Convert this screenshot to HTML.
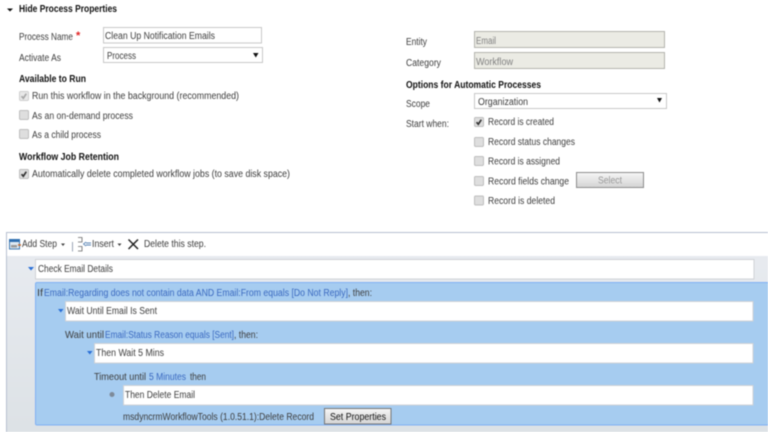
<!DOCTYPE html>
<html><head><meta charset="utf-8">
<style>
html,body{margin:0;padding:0;background:#fff;width:768px;height:432px;overflow:hidden}
svg{display:block;filter:blur(0.45px)}
text{font-family:"Liberation Sans",sans-serif;font-size:10px;fill:#3c3c3c;white-space:pre}
.b{font-weight:bold;fill:#111;font-size:10px}
.l{fill:#3a69c0}
.g{fill:#808080}
.box{fill:#fff;stroke:#c8c8c8;stroke-width:1}
.dis{fill:#ebebe4;stroke:#b4b4ae;stroke-width:1}
.inp{fill:#fff;stroke:#d0d2d6;stroke-width:1}
.cb{fill:#dedede;stroke:#bdbdbd;stroke-width:1}
.chk{fill:none;stroke:#333;stroke-width:1.7}
</style></head><body>
<svg width="768" height="432" viewBox="0 0 768 432" xmlns="http://www.w3.org/2000/svg">
<defs>
<linearGradient id="bt" x1="0" y1="0" x2="0" y2="1"><stop offset="0" stop-color="#f6f6f6"/><stop offset="1" stop-color="#d4d4d4"/></linearGradient>
<linearGradient id="pb" x1="0" y1="0" x2="0" y2="1"><stop offset="0" stop-color="#e9ecf1"/><stop offset="1" stop-color="#dde2e6"/></linearGradient>
</defs>

<path d="M7 8.500h6l-3 3z" fill="#111"/>
<text class="b" x="19" y="12" textLength="98" lengthAdjust="spacingAndGlyphs">Hide Process Properties</text>

<text x="19" y="40" textLength="54" lengthAdjust="spacingAndGlyphs">Process Name</text>
<text x="76" y="39" style="fill:#e02020;font-size:11px;font-weight:bold">*</text>
<rect class="box" x="103.500" y="27.500" width="158" height="15.500"/>
<text x="105" y="39" textLength="110" lengthAdjust="spacingAndGlyphs">Clean Up Notification Emails</text>

<text x="19" y="61" textLength="42" lengthAdjust="spacingAndGlyphs">Activate As</text>
<rect class="box" x="103.500" y="47.500" width="159" height="15"/>
<text x="107" y="59" textLength="29" lengthAdjust="spacingAndGlyphs">Process</text>
<path d="M253 53h5.500l-2.700 4.500z" fill="#111"/>

<text class="b" x="19" y="82" textLength="67" lengthAdjust="spacingAndGlyphs">Available to Run</text>

<rect class="cb" x="19.500" y="91.500" width="9" height="9" rx="1.200" style="fill:#e8e8e8;stroke:#cfcfcf"/>
<path class="chk" d="M21.500 96.200l1.800 2 3-4.500" style="stroke:#a8a8a8"/>
<text x="32" y="99" textLength="207" lengthAdjust="spacingAndGlyphs">Run this workflow in the background (recommended)</text>

<rect class="cb" x="19.500" y="110.500" width="9" height="9" rx="1.200"/>
<text x="32" y="119" textLength="101" lengthAdjust="spacingAndGlyphs">As an on-demand process</text>

<rect class="cb" x="19.500" y="129.500" width="9" height="9" rx="1.200"/>
<text x="32" y="138" textLength="69" lengthAdjust="spacingAndGlyphs">As a child process</text>

<text class="b" x="19" y="160" textLength="100" lengthAdjust="spacingAndGlyphs">Workflow Job Retention</text>

<rect class="cb" x="19.500" y="169.500" width="9" height="9" rx="1.200"/>
<path class="chk" d="M21.500 174.200l1.800 2 3-4.500"/>
<text x="32" y="177" textLength="258" lengthAdjust="spacingAndGlyphs">Automatically delete completed workflow jobs (to save disk space)</text>

<text x="406" y="45" textLength="21" lengthAdjust="spacingAndGlyphs">Entity</text>
<rect class="dis" x="474.500" y="31.500" width="190" height="16"/>
<text class="g" x="476" y="44" textLength="20" lengthAdjust="spacingAndGlyphs">Email</text>

<text x="406" y="66" textLength="35" lengthAdjust="spacingAndGlyphs">Category</text>
<rect class="dis" x="474.500" y="52.500" width="190" height="16"/>
<text class="g" x="476" y="65" textLength="37" lengthAdjust="spacingAndGlyphs">Workflow</text>

<text class="b" x="406" y="88" textLength="135" lengthAdjust="spacingAndGlyphs">Options for Automatic Processes</text>

<text x="406" y="107" textLength="24" lengthAdjust="spacingAndGlyphs">Scope</text>
<rect class="box" x="474.500" y="93.500" width="192" height="15"/>
<text x="478" y="105" textLength="50" lengthAdjust="spacingAndGlyphs">Organization</text>
<path d="M657 98h5l-2.500 4.500z" fill="#111"/>

<text x="406" y="127" textLength="43" lengthAdjust="spacingAndGlyphs">Start when:</text>

<rect class="cb" x="474.500" y="117.500" width="9" height="9" rx="1.200"/>
<path class="chk" d="M476.500 122.200l1.800 2 3-4.500"/>
<text x="488" y="125" textLength="66" lengthAdjust="spacingAndGlyphs">Record is created</text>

<rect class="cb" x="474.500" y="137.500" width="9" height="9" rx="1.200"/>
<text x="488" y="145" textLength="87" lengthAdjust="spacingAndGlyphs">Record status changes</text>

<rect class="cb" x="474.500" y="156.500" width="9" height="9" rx="1.200"/>
<text x="488" y="164.500" textLength="72" lengthAdjust="spacingAndGlyphs">Record is assigned</text>

<rect class="cb" x="474.500" y="176.500" width="9" height="9" rx="1.200"/>
<text x="488" y="184.500" textLength="81" lengthAdjust="spacingAndGlyphs">Record fields change</text>
<rect x="576.500" y="172.500" width="67" height="15" fill="url(#bt)" stroke="#8c8c8c"/>
<text x="598" y="183.500" textLength="24" lengthAdjust="spacingAndGlyphs" style="fill:#999">Select</text>

<rect class="cb" x="474.500" y="196" width="9" height="9" rx="1.200"/>
<text x="488" y="204" textLength="67" lengthAdjust="spacingAndGlyphs">Record is deleted</text>

<!-- designer panel -->
<rect x="6" y="232" width="762" height="200" fill="url(#pb)"/>
<rect x="6.500" y="232.500" width="762" height="200" fill="none" stroke="#b7c0d0"/>
<rect x="7" y="233" width="761" height="23" fill="#fff"/>

<rect x="9.500" y="239.500" width="10" height="9.500" fill="#dfe9f2" stroke="#3f78b0"/>
<rect x="9" y="239" width="11" height="3" fill="#2f6fb0"/>
<rect x="11" y="245" width="6" height="2.500" fill="#9a9a9a"/>
<path d="M18 245h3" stroke="#c86a2a" stroke-width="1.500"/>
<text x="22" y="247" textLength="35" lengthAdjust="spacingAndGlyphs">Add Step</text>
<path d="M61 243.500h4l-2 2.500z" fill="#444"/>
<path d="M72.500 242v9.500" stroke="#9aa5b5"/>

<path d="M78 237.500h4v4.500h-4M78 246.500h4v4.500h-4" fill="none" stroke="#666" stroke-width=".8"/>
<path d="M91 243h-5M91 245h-5M86 242l-2.500 2 2.500 2" fill="none" stroke="#5a85b5" stroke-width=".9"/>
<text x="92" y="247" textLength="22" lengthAdjust="spacingAndGlyphs">Insert</text>
<path d="M117.500 243.500h4l-2 2.500z" fill="#444"/>
<path d="M128.500 239.500l9.500 9.500M138 239.500l-9.500 9.500" stroke="#222" stroke-width="1.500" fill="none"/>
<text x="144" y="247" textLength="62" lengthAdjust="spacingAndGlyphs">Delete this step.</text>

<path d="M28 267h6l-3 3.500z" fill="#2a6fd6"/>
<rect class="inp" x="35.500" y="259.500" width="718.500" height="19.500"/>
<text x="38" y="272" textLength="75" lengthAdjust="spacingAndGlyphs">Check Email Details</text>

<rect x="35.500" y="282.500" width="733" height="142.500" rx="1.500" fill="#a6ccf0" stroke="#80b0f4"/>
<text x="37" y="296" textLength="6" lengthAdjust="spacingAndGlyphs">If</text>
<text class="l" x="44" y="296" textLength="304" lengthAdjust="spacingAndGlyphs">Email:Regarding does not contain data AND Email:From equals [Do Not Reply]</text>
<text x="348" y="296" textLength="24" lengthAdjust="spacingAndGlyphs">, then:</text>

<path d="M58 309h5.500l-2.700 3.500z" fill="#2a6fd6"/>
<rect class="inp" x="65.500" y="301.500" width="687.500" height="19.500"/>
<text x="67" y="314" textLength="90" lengthAdjust="spacingAndGlyphs">Wait Until Email Is Sent</text>

<text x="65" y="338" textLength="39" lengthAdjust="spacingAndGlyphs">Wait until</text>
<text class="l" x="105" y="338" textLength="129" lengthAdjust="spacingAndGlyphs">Email:Status Reason equals [Sent]</text>
<text x="234" y="338" textLength="24" lengthAdjust="spacingAndGlyphs">, then:</text>

<path d="M87 351h5.500l-2.700 3.500z" fill="#2a6fd6"/>
<rect class="inp" x="94.500" y="343.500" width="658.500" height="19.500"/>
<text x="96" y="356" textLength="68" lengthAdjust="spacingAndGlyphs">Then Wait 5 Mins</text>

<text x="94" y="380" textLength="52" lengthAdjust="spacingAndGlyphs">Timeout until</text>
<text class="l" x="149" y="380" textLength="37" lengthAdjust="spacingAndGlyphs">5 Minutes</text>
<text x="190" y="380" textLength="16" lengthAdjust="spacingAndGlyphs">then</text>

<circle cx="112" cy="394.500" r="2.500" fill="#7d8a99"/>
<rect class="inp" x="123.500" y="385.500" width="629.500" height="19.500"/>
<text x="125" y="398" textLength="70" lengthAdjust="spacingAndGlyphs">Then Delete Email</text>

<text x="123" y="420" textLength="191" lengthAdjust="spacingAndGlyphs">msdyncrmWorkflowTools (1.0.51.1):Delete Record</text>
<rect x="324.500" y="408.500" width="66.500" height="15.500" fill="url(#bt)" stroke="#777"/>
<text x="330" y="420" textLength="56" lengthAdjust="spacingAndGlyphs" style="fill:#111">Set Properties</text>
</svg>
</body></html>
